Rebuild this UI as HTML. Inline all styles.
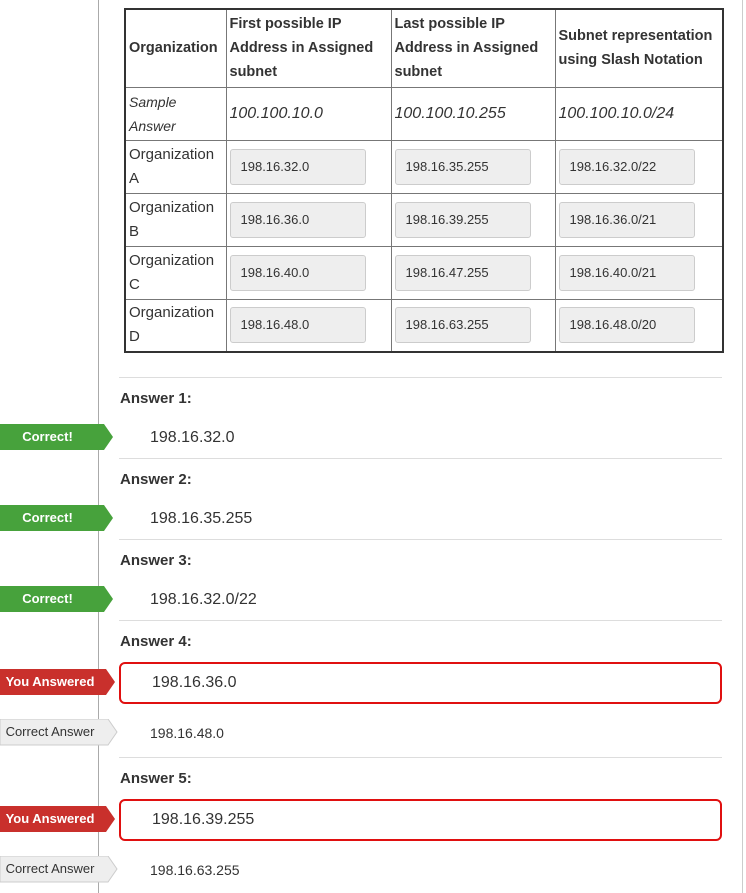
<!DOCTYPE html>
<html><head><style>
body{margin:0;width:746px;height:893px;background:#fff;position:relative;overflow:hidden;font-family:"Liberation Sans",sans-serif;color:#333}
.a{position:absolute}
table{position:absolute;left:124px;top:8px;width:598px;table-layout:fixed;border-collapse:collapse;border:2px solid #333;font-size:15px}
td{border:1px solid #777;padding:0 3px;vertical-align:middle;line-height:24px;overflow:hidden}
th{border:1px solid #777;padding:0 3px;text-align:left;line-height:24px;font-weight:bold;color:#333;font-size:14.5px}
.inp{width:136px;height:36px;background:#eee;border:1px solid #ccc;border-radius:3px;box-sizing:border-box;font-size:13px;line-height:34px;padding-left:10px}
.hr{position:absolute;left:119px;width:603px;height:1px;background:#ddd}
.lbl{position:absolute;left:120px;font-weight:bold;font-size:15px}
.val{position:absolute;left:150px;font-size:16px}
.b{position:absolute;left:0;height:26px;font-size:13px;font-weight:bold;line-height:26px;text-align:center;color:#fff}
.box{position:absolute;left:119px;width:603px;height:42px;border:2px solid #e01010;border-radius:6px;box-sizing:border-box;font-size:16px;line-height:38px;padding-left:31px}
</style></head><body>
<div class="a" style="left:98px;top:0;width:1px;height:893px;background:#aaa"></div>
<div class="a" style="left:742px;top:0;width:1px;height:893px;background:#ccc"></div>
<table>
<colgroup><col style="width:101px"><col style="width:165px"><col style="width:164px"><col style="width:168px"></colgroup>
<tr style="height:78px"><th>Organization</th><th>First possible IP Address in Assigned subnet</th><th>Last possible IP Address in Assigned subnet</th><th>Subnet representation using Slash Notation</th></tr>
<tr style="height:53px;font-style:italic"><td style="font-size:14px">Sample Answer</td><td style="font-size:16px">100.100.10.0</td><td style="font-size:16px">100.100.10.255</td><td style="font-size:16px">100.100.10.0/24</td></tr>
<tr style="height:53px"><td>Organization A</td><td><div class="inp">198.16.32.0</div></td><td><div class="inp">198.16.35.255</div></td><td><div class="inp">198.16.32.0/22</div></td></tr>
<tr style="height:53px"><td>Organization B</td><td><div class="inp">198.16.36.0</div></td><td><div class="inp">198.16.39.255</div></td><td><div class="inp">198.16.36.0/21</div></td></tr>
<tr style="height:53px"><td>Organization C</td><td><div class="inp">198.16.40.0</div></td><td><div class="inp">198.16.47.255</div></td><td><div class="inp">198.16.40.0/21</div></td></tr>
<tr style="height:53px"><td>Organization D</td><td><div class="inp">198.16.48.0</div></td><td><div class="inp">198.16.63.255</div></td><td><div class="inp">198.16.48.0/20</div></td></tr>
</table>

<div class="hr" style="top:377px"></div>
<div class="lbl" style="top:390px">Answer 1:</div>
<svg class="a" style="left:0;top:424px" width="114" height="27"><polygon points="0,0 104,0 113,13 104,26 0,26" fill="#47a23c"/></svg>
<div class="b" style="top:424px;width:95px">Correct!</div>
<div class="val" style="top:429px">198.16.32.0</div>
<div class="hr" style="top:458px"></div>
<div class="lbl" style="top:471px">Answer 2:</div>
<svg class="a" style="left:0;top:505px" width="114" height="27"><polygon points="0,0 104,0 113,13 104,26 0,26" fill="#47a23c"/></svg>
<div class="b" style="top:505px;width:95px">Correct!</div>
<div class="val" style="top:510px">198.16.35.255</div>
<div class="hr" style="top:539px"></div>
<div class="lbl" style="top:552px">Answer 3:</div>
<svg class="a" style="left:0;top:586px" width="114" height="27"><polygon points="0,0 104,0 113,13 104,26 0,26" fill="#47a23c"/></svg>
<div class="b" style="top:586px;width:95px">Correct!</div>
<div class="val" style="top:591px">198.16.32.0/22</div>
<div class="hr" style="top:620px"></div>
<div class="lbl" style="top:633px">Answer 4:</div>
<svg class="a" style="left:0;top:669px" width="117" height="27"><polygon points="0,0 106,0 115,13 106,26 0,26" fill="#c9302c"/></svg>
<div class="b" style="top:669px;width:100px">You Answered</div>
<div class="box" style="top:662px">198.16.36.0</div>
<svg class="a" style="left:0;top:719px" width="119" height="27"><polygon points="0,0 108,0 117,13 108,26 0,26" fill="#eee" stroke="#ccc"/></svg>
<div class="b" style="top:719px;width:100px;color:#333;font-weight:normal">Correct Answer</div>
<div class="val" style="top:725px;font-size:14px">198.16.48.0</div>
<div class="hr" style="top:757px"></div>
<div class="lbl" style="top:770px">Answer 5:</div>
<svg class="a" style="left:0;top:806px" width="117" height="27"><polygon points="0,0 106,0 115,13 106,26 0,26" fill="#c9302c"/></svg>
<div class="b" style="top:806px;width:100px">You Answered</div>
<div class="box" style="top:799px">198.16.39.255</div>
<svg class="a" style="left:0;top:856px" width="119" height="27"><polygon points="0,0 108,0 117,13 108,26 0,26" fill="#eee" stroke="#ccc"/></svg>
<div class="b" style="top:856px;width:100px;color:#333;font-weight:normal">Correct Answer</div>
<div class="val" style="top:862px;font-size:14px">198.16.63.255</div>
</body></html>
